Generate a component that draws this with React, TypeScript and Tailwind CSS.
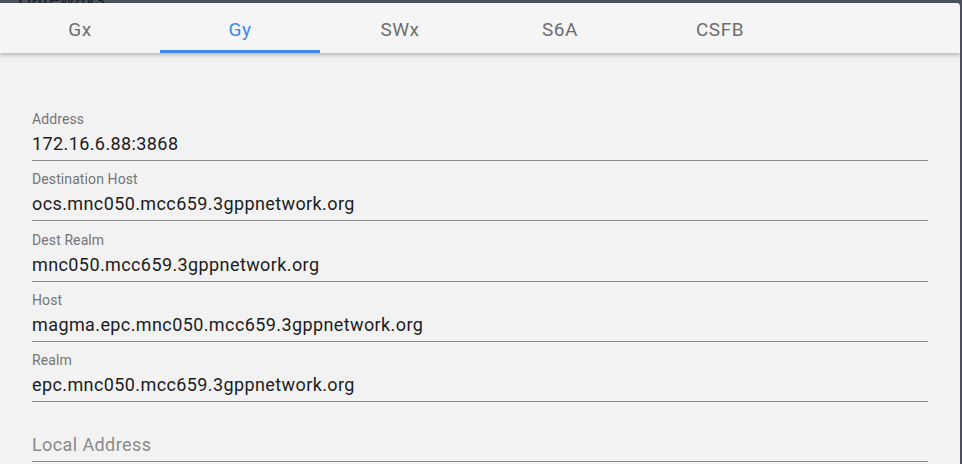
const tabs = ['Gx', 'Gy', 'SWx', 'S6A', 'CSFB']

const fields = [
  { label: 'Address', value: '172.16.6.88:3868' },
  { label: 'Destination Host', value: 'ocs.mnc050.mcc659.3gppnetwork.org' },
  { label: 'Dest Realm', value: 'mnc050.mcc659.3gppnetwork.org' },
  { label: 'Host', value: 'magma.epc.mnc050.mcc659.3gppnetwork.org' },
  { label: 'Realm', value: 'epc.mnc050.mcc659.3gppnetwork.org' },
]

const Field = ({ label, value, extra }: { label: string; value: string; extra?: boolean }) => (
  <div className={`flex flex-col ${extra ? 'pt-[11px]' : 'pt-[10px]'}`}>
    <span className="text-[14px] leading-[16px] tracking-[0.1px] text-[#757575] h-[16px]">{label}</span>
    <span className="mt-[7px] text-[18px] leading-[20px] tracking-[0.4px] text-[#1c1c1c]">{value}</span>
    <div className="mt-[6px] h-px bg-[#8c8c8c]" />
  </div>
)

export default function App() {
  const active = 1
  return (
    <div className="w-[962px] h-[464px] bg-[#4b505a] overflow-hidden relative font-['Roboto','Liberation_Sans',sans-serif]">
      {/* page behind the dialog */}
      <span className="absolute left-[18px] top-[-16px] text-[20px] text-[#1f2227]">Gateways</span>

      <div className="relative mt-[3px] w-[960px] h-[461px] bg-[#f2f2f2] rounded-tr-[4px] overflow-hidden">
        <div className="h-[50px] bg-[#f5f5f5] flex shadow-[0_2px_4px_rgba(0,0,0,0.25)] relative z-10">
          {tabs.map((t, i) => (
            <div key={t} className="w-[160px] flex flex-col">
              <div
                className={`flex-1 flex items-center justify-center pt-[7px] text-[19px] tracking-[0.5px] ${
                  i === active ? 'text-[#3d87f5]' : 'text-[#6e6e6e]'
                }`}
              >
                {t}
              </div>
              <div className={`h-[3px] ${i === active ? 'bg-[#3d87f5]' : ''}`} />
            </div>
          ))}
        </div>

        <div className="px-[32px] pt-[48px] flex flex-col">
          {fields.map((f, i) => (
            <Field key={f.label} label={f.label} value={f.value} extra={i === 2} />
          ))}
          <div className="flex flex-col pt-[10px]">
            <span className="h-[16px]" />
            <span className="mt-[7px] text-[18px] leading-[20px] tracking-[0.4px] text-[#8a8a8a]">Local Address</span>
            <div className="mt-[6px] h-px bg-[#8c8c8c]" />
          </div>
        </div>
      </div>
    </div>
  )
}
